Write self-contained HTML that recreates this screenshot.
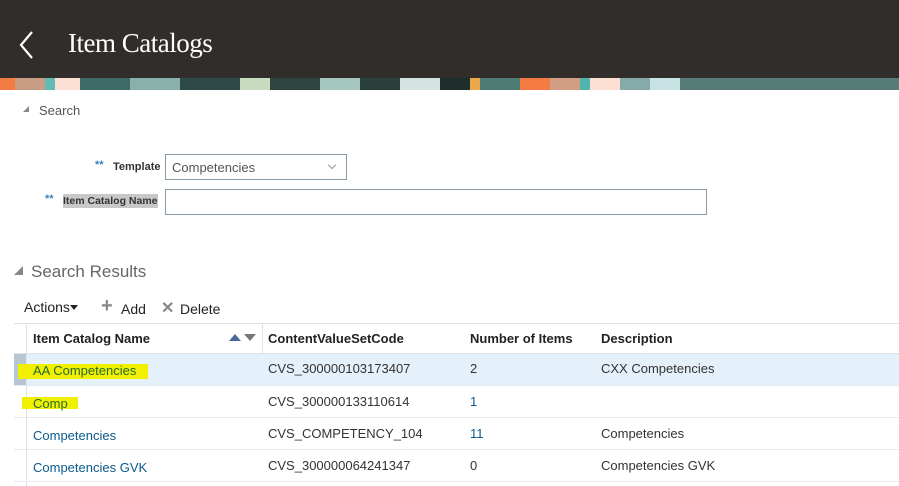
<!DOCTYPE html>
<html><head><style>
body{margin:0;width:899px;height:486px;overflow:hidden;background:#fff;font-family:"Liberation Sans",Arial,sans-serif;position:relative}
.a{position:absolute;white-space:nowrap}
.hd{left:0;top:0;width:899px;height:78px;background:#312d2a}
.ban{left:0;top:78px;width:899px;height:12px;background:linear-gradient(90deg,#f47c44 0 15px,#c99c84 15px 45px,#5ebcb4 45px 55px,#fde0d4 55px 80px,#3d6b66 80px 130px,#8ab0ac 130px 180px,#2e4a46 180px 240px,#c9dcc0 240px 270px,#2f4542 270px 320px,#a5c7c0 320px 360px,#2a3e3c 360px 400px,#d5e3e2 400px 440px,#1f2d2c 440px 470px,#e9a84a 470px 480px,#4e7a74 480px 520px,#f47c44 520px 550px,#d19e84 550px 580px,#4fb5ad 580px 590px,#fde0d4 590px 620px,#85aaa8 620px 650px,#c8e3e4 650px 680px,#577c77 680px 899px)}
.tri{width:0;height:0;border-left:7px solid transparent;border-bottom:7px solid #888}
.lk{color:#0b5a8a;font-size:13px}
.tx{color:#333;font-size:13px}
.hl{background:#f0f000;}
</style></head><body>
<div class="a hd"></div>
<svg class="a" style="left:14px;top:30px" width="24" height="30"><path d="M18 2 L7 15 L18 28" stroke="#fff" stroke-width="2.2" fill="none"/></svg>
<div class="a" style="left:68px;top:28px;color:#fff;font:27px 'Liberation Serif',serif;letter-spacing:-0.5px">Item Catalogs</div>
<div class="a ban"></div>
<div class="a tri" style="left:23px;top:106px;border-left-width:6px;border-bottom-width:6px"></div>
<div class="a" style="left:39px;top:103px;font-size:13px;color:#555">Search</div>
<div class="a" style="left:95px;top:159px;font-size:11px;color:#3b7fc2;font-weight:bold">**</div>
<div class="a" style="left:113px;top:161px;font-size:11px;color:#333;font-weight:bold">Template</div>
<div class="a" style="left:165px;top:154px;width:180px;height:24px;border:1px solid #8a9aa4"></div>
<div class="a" style="left:172px;top:160px;font-size:13px;color:#555">Competencies</div>
<div class="a" style="left:329px;top:162px;width:5px;height:5px;border-right:1px solid #999;border-bottom:1px solid #999;transform:rotate(45deg)"></div>
<div class="a" style="left:45px;top:193px;font-size:11px;color:#3b7fc2;font-weight:bold">**</div>
<div class="a" style="left:63px;top:194px;font-size:10.5px;color:#333;font-weight:bold;background:#c8c8c8;padding:1px 0">Item Catalog Name</div>
<div class="a" style="left:165px;top:189px;width:540px;height:24px;border:1px solid #8a9aa4"></div>
<div class="a tri" style="left:14px;top:266px;border-left-width:9px;border-bottom-width:9px"></div>
<div class="a" style="left:31px;top:262px;font-size:17px;color:#666">Search Results</div>
<div class="a tx" style="left:24px;top:299px;font-size:14px;color:#222">Actions</div>
<div class="a" style="left:70px;top:305px;border-left:4px solid transparent;border-right:4px solid transparent;border-top:5px solid #222"></div>
<div class="a" style="left:101px;top:296px;font-size:20px;color:#888;font-weight:bold;line-height:20px">+</div>
<div class="a" style="left:121px;top:301px;font-size:14px;color:#222">Add</div>
<div class="a" style="left:161px;top:298px;font-size:16px;color:#888;font-weight:bold">✕</div>
<div class="a" style="left:180px;top:301px;font-size:14px;color:#222">Delete</div>
<div class="a" style="left:14px;top:323px;width:885px;height:1px;background:#dde2e6"></div>
<div class="a" style="left:14px;top:354px;width:885px;height:31px;background:#e4f0fa"></div>
<div class="a" style="left:14px;top:354px;width:12px;height:31px;background:#b7c6d3"></div>
<div class="a" style="left:26px;top:324px;width:1px;height:162px;background:#dde2e6"></div>
<div class="a" style="left:262px;top:324px;width:1px;height:30px;background:#dde2e6"></div>
<div class="a" style="left:14px;top:353px;width:885px;height:1px;background:#dde2e6"></div>
<div class="a" style="left:14px;top:385px;width:885px;height:1px;background:#e6eaed"></div>
<div class="a" style="left:14px;top:417px;width:885px;height:1px;background:#e6eaed"></div>
<div class="a" style="left:14px;top:449px;width:885px;height:1px;background:#e6eaed"></div>
<div class="a" style="left:14px;top:481px;width:885px;height:1px;background:#e6eaed"></div>
<div class="a tx" style="left:33px;top:331px;font-weight:bold;color:#222">Item Catalog Name</div>
<div class="a" style="left:229px;top:334px;border-left:6px solid transparent;border-right:6px solid transparent;border-bottom:7px solid #4a6b9a"></div>
<div class="a" style="left:244px;top:334px;border-left:6px solid transparent;border-right:6px solid transparent;border-top:7px solid #777"></div>
<div class="a tx" style="left:268px;top:331px;font-weight:bold;color:#222">ContentValueSetCode</div>
<div class="a tx" style="left:470px;top:331px;font-weight:bold;color:#222">Number of Items</div>
<div class="a tx" style="left:601px;top:331px;font-weight:bold;color:#222">Description</div>
<div class="a hl" style="left:18px;top:364px;width:130px;height:15px"></div>
<div class="a lk" style="left:33px;top:363px;color:#2a6a30">AA Competencies</div>
<div class="a hl" style="left:22px;top:397px;width:56px;height:12px"></div>
<div class="a lk" style="left:33px;top:396px;color:#2a6a30">Comp</div>
<div class="a lk" style="left:33px;top:428px">Competencies</div>
<div class="a lk" style="left:33px;top:460px">Competencies GVK</div>
<div class="a tx" style="left:268px;top:361px">CVS_300000103173407</div>
<div class="a tx" style="left:268px;top:394px">CVS_300000133110614</div>
<div class="a tx" style="left:268px;top:426px">CVS_COMPETENCY_104</div>
<div class="a tx" style="left:268px;top:458px">CVS_300000064241347</div>
<div class="a tx" style="left:470px;top:361px">2</div>
<div class="a lk" style="left:470px;top:394px">1</div>
<div class="a lk" style="left:470px;top:426px">11</div>
<div class="a tx" style="left:470px;top:458px">0</div>
<div class="a tx" style="left:601px;top:361px">CXX Competencies</div>
<div class="a tx" style="left:601px;top:426px">Competencies</div>
<div class="a tx" style="left:601px;top:458px">Competencies GVK</div>
</body></html>
